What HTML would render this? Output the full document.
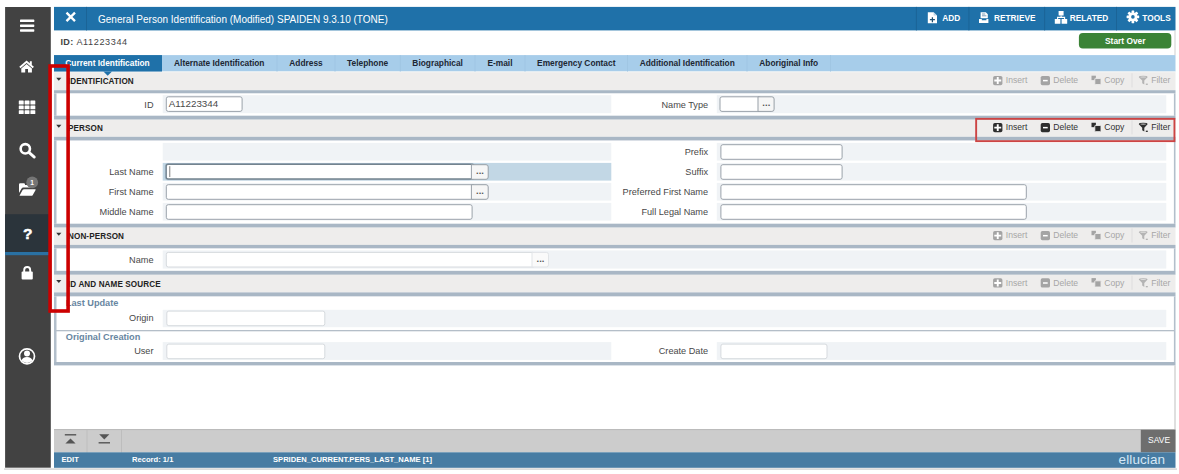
<!DOCTYPE html>
<html><head><meta charset="utf-8"><title>General Person Identification</title>
<style>
html,body{margin:0;padding:0;background:#fff;}
body{width:1179px;height:474px;position:relative;overflow:hidden;font-family:"Liberation Sans",sans-serif;font-size:9.17px;color:#333;}
.a{position:absolute;white-space:nowrap;}
#bg{left:0;top:0;}
#title{left:98px;top:8px;line-height:23px;font-size:10px;color:#fff;}
.hb{top:7px;line-height:23.6px;font-size:8.3px;font-weight:bold;color:#fff;}
#idrow{left:60.5px;top:35.6px;font-size:9.1px;letter-spacing:0.6px;line-height:12px;color:#444;}
#idrow b{margin-right:0.3px;letter-spacing:0.3px}
#start{left:1079px;top:34px;width:92.5px;line-height:15.5px;color:#fff;font-weight:bold;font-size:8.4px;text-align:center;}
.tab{top:55.1px;line-height:16.8px;font-weight:bold;font-size:8.35px;color:#1d2733;text-align:center;}
.tab.act{color:#fff;}
.nm{left:68px;font-weight:bold;font-size:8.15px;color:#222;letter-spacing:0.1px;}
.lbl{text-align:right;font-size:9.17px;color:#484848;line-height:17px;height:17px;width:120px;}
.val{font-size:9.8px;color:#4a4a4a;line-height:14px;}
.dots{font-size:9.4px;line-height:14.6px;color:#555;font-weight:bold;letter-spacing:0.1px;text-align:center;width:17px;}
.tool{font-size:8.6px;line-height:12px;}
.sub{font-weight:bold;color:#6886a1;font-size:9.2px;line-height:11px;}
.sb{top:452.9px;color:#fff;font-size:7.6px;font-weight:bold;line-height:14.6px;}
#save{left:1140.8px;top:429.8px;width:34.7px;color:#fff;font-size:8.5px;line-height:21px;text-align:center;text-indent:2px;}
#ell{left:1118.6px;top:452.8px;font-size:13.5px;letter-spacing:0.1px;line-height:13.4px;color:#d5e8f6;}
#q{left:5px;top:222.6px;width:45.5px;text-align:center;color:#fff;font-weight:bold;font-size:15.5px;line-height:22px;-webkit-text-stroke:0.5px #fff;}
</style></head><body>
<svg id="bg" class="a" width="1179" height="474" viewBox="0 0 1179 474">
<rect x="5.10" y="7.00" width="45.70" height="460.70" fill="#424242"/>
<rect x="5.10" y="214.20" width="45.70" height="37.80" fill="#2b343b"/>
<rect x="5.10" y="252.00" width="45.70" height="3.20" fill="#2a71a3"/>
<g transform="translate(5 7)">
<g fill="#fff">
<rect x="15" y="12.6" width="14.3" height="2.5" rx="0.6"/><rect x="15" y="17.4" width="14.3" height="2.5" rx="0.6"/><rect x="15" y="22.2" width="14.3" height="2.5" rx="0.6"/>
<path d="M21.6 53.4 L14.3 59.8 L15.5 61.2 L21.6 55.9 L27.7 61.2 L28.9 59.8 L26.8 58 V54.3 H24.8 V56.2 Z"/>
<path d="M21.6 56.9 L16.3 61.5 V65.4 H20.2 V62.1 H23 V65.4 H26.9 V61.5 Z"/>
<rect x="13.8" y="93.6" width="4.9" height="3.9" rx="0.5"/><rect x="19.6" y="93.6" width="4.9" height="3.9" rx="0.5"/><rect x="25.4" y="93.6" width="4.9" height="3.9" rx="0.5"/>
<rect x="13.8" y="98.4" width="4.9" height="3.9" rx="0.5"/><rect x="19.6" y="98.4" width="4.9" height="3.9" rx="0.5"/><rect x="25.4" y="98.4" width="4.9" height="3.9" rx="0.5"/>
<rect x="13.8" y="103.2" width="4.9" height="3.9" rx="0.5"/><rect x="19.6" y="103.2" width="4.9" height="3.9" rx="0.5"/><rect x="25.4" y="103.2" width="4.9" height="3.9" rx="0.5"/>
</g>
<circle cx="20.3" cy="141.8" r="4.65" fill="none" stroke="#fff" stroke-width="2.6"/>
<path d="M24.2 145.6 L29.3 150.1" stroke="#fff" stroke-width="2.8" stroke-linecap="round"/>
<g fill="#fff">
<path d="M14 177.5 q0 -1.2 1.2 -1.2 h3.6 q1.2 0 1.2 1.2 v0.5 h5.6 q1.2 0 1.2 1.2 v1.3 h-8.6 q-1 0 -1.6 1 l-2.6 4.6 Z"/>
<path d="M14.6 188.5 l3 -5.4 q0.5 -0.9 1.5 -0.9 h11 q1 0 0.5 0.9 l-2.8 4.8 q-0.5 0.9 -1.5 0.9 h-11.2 q-0.8 0 -0.5 -0.3 Z"/>
</g>
<circle cx="27.2" cy="175.4" r="5.9" fill="#757575"/>
<text x="27" y="178" font-size="6.6" font-weight="bold" fill="#fff" text-anchor="middle" font-family="Liberation Sans, sans-serif">1</text>
<path d="M19.2 265.2 v-2.2 a3 3 0 0 1 6 0 v2.2" fill="none" stroke="#fff" stroke-width="1.9"/>
<rect x="16.6" y="264.6" width="11.2" height="7.9" rx="1" fill="#fff"/>
<circle cx="22" cy="349.3" r="7.5" fill="none" stroke="#fff" stroke-width="1.7"/>
<circle cx="22" cy="346.6" r="3" fill="#fff"/>
<path d="M16.6 353.6 q0.8 -3.6 5.4 -3.6 q4.6 0 5.4 3.6 q-2.2 2.4 -5.4 2.4 q-3.2 0 -5.4 -2.4 Z" fill="#fff"/>
</g>
<rect x="54.00" y="6.90" width="1121.50" height="23.50" fill="#1f71a9"/>
<rect x="86.00" y="6.90" width="1.00" height="23.50" fill="#1b6497"/>
<rect x="915.90" y="6.90" width="1.00" height="23.50" fill="#1b6497"/>
<rect x="968.40" y="6.90" width="1.00" height="23.50" fill="#1b6497"/>
<rect x="1044.10" y="6.90" width="1.00" height="23.50" fill="#1b6497"/>
<rect x="1116.00" y="6.90" width="1.00" height="23.50" fill="#1b6497"/>
<path d="M66.5 12.6 L75 21.1 M75 12.6 L66.5 21.1" stroke="#fff" stroke-width="2.3"/>
<g>
<path d="M927.8 12.2 H933.6 L937 15.6 V23.2 H927.8 Z" fill="#fff"/>
<path d="M933.6 12.2 V15.6 H937 Z" fill="#b9d3e6"/>
<path d="M932.4 17.2 V22.2 M929.9 19.7 H934.9" stroke="#1d4f73" stroke-width="1.25"/>
<path d="M980.6 12.2 H985.8 L987.8 14.2 V18.2 H980.6 Z" fill="#fff"/>
<path d="M982 14 H985.2 M982 15.8 H986.4" stroke="#6f93b0" stroke-width="0.9"/>
<path d="M979 19 H981.8 V20.2 H986.4 V19 H988.4 V23 H979 Z" fill="#fff"/>
<rect x="1058.6" y="11" width="5" height="4.6" rx="0.4" fill="#fff"/>
<path d="M1061.1 15.6 V17.4 M1057.6 19.2 V17.4 H1064.6 V19.2" stroke="#fff" stroke-width="1.1" fill="none"/>
<rect x="1054.8" y="19" width="5.6" height="4.8" rx="0.4" fill="#fff"/>
<rect x="1061.6" y="19" width="5.6" height="4.8" rx="0.4" fill="#fff"/>
<g transform="translate(1132.9 16.9)">
<g fill="#fff">
<rect x="-1.35" y="-6.3" width="2.7" height="12.6" rx="0.4"/>
<rect x="-1.35" y="-6.3" width="2.7" height="12.6" rx="0.4" transform="rotate(45)"/>
<rect x="-1.35" y="-6.3" width="2.7" height="12.6" rx="0.4" transform="rotate(90)"/>
<rect x="-1.35" y="-6.3" width="2.7" height="12.6" rx="0.4" transform="rotate(135)"/>
<circle r="4.4"/>
</g>
<circle r="1.8" fill="#1f71a9"/>
</g>
</g>
<rect x="1078.9" y="33" width="92.4" height="15.5" rx="4" fill="#3b8336"/>
<rect x="54.00" y="55.10" width="1121.50" height="16.40" fill="#a7cdea"/>
<rect x="54.00" y="71.50" width="1121.50" height="0.70" fill="#f3f3f2"/>
<rect x="54.00" y="55.10" width="108.00" height="16.40" fill="#1f71a9"/>
<rect x="276.50" y="55.10" width="1.00" height="16.40" fill="#a0c6e3"/>
<rect x="334.50" y="55.10" width="1.00" height="16.40" fill="#a0c6e3"/>
<rect x="399.80" y="55.10" width="1.00" height="16.40" fill="#a0c6e3"/>
<rect x="474.50" y="55.10" width="1.00" height="16.40" fill="#a0c6e3"/>
<rect x="524.50" y="55.10" width="1.00" height="16.40" fill="#a0c6e3"/>
<rect x="627.00" y="55.10" width="1.00" height="16.40" fill="#a0c6e3"/>
<rect x="746.50" y="55.10" width="1.00" height="16.40" fill="#a0c6e3"/>
<rect x="830.00" y="55.10" width="1.00" height="16.40" fill="#a0c6e3"/>
<rect x="54.00" y="72.20" width="1121.50" height="18.00" fill="#eeedec"/>
<rect x="54.00" y="90.20" width="1121.50" height="3.20" fill="#a9b7c5"/>
<path d="M56.20 77.70 h5.2 l-2.6 3 Z" fill="#333"/>
<g transform="translate(993 75.80)"><rect x="0.1" y="0.1" width="9.3" height="9.3" rx="1.7" fill="#a4a4a4"/><path d="M4.75 1.3 V8.2 M1.3 4.75 H8.2" stroke="#fff" stroke-width="1.9"/></g>
<g transform="translate(1040.6 75.80)"><rect x="0.1" y="0.1" width="9.3" height="9.3" rx="1.7" fill="#a4a4a4"/><path d="M2.4 4.8 H7.1" stroke="#fff" stroke-width="1.5"/></g>
<g transform="translate(1091.3 75.50)"><rect x="0.2" y="0.2" width="4.4" height="4.4" fill="#a4a4a4"/><rect x="3.5" y="2.9" width="6.2" height="6.2" rx="0.5" fill="#a4a4a4" stroke="#eeedec" stroke-width="0.9"/></g>
<rect x="1131.50" y="73.30" width="1.00" height="14.00" fill="#dddddd"/>
<g transform="translate(1138.6 75.60)"><path d="M0.2 1.6 Q0.2 0.2 4.6 0.2 Q9 0.2 9 1.6 L5.7 5 V8.9 L3.6 7.6 V5 Z" fill="#b4b4b4"/><ellipse cx="4.6" cy="1.45" rx="3" ry="0.55" fill="#eeedec" opacity="0.75"/><rect x="7.2" y="8" width="2" height="1.3" fill="#b4b4b4"/></g>
<rect x="54.00" y="93.40" width="1121.50" height="22.40" fill="#b3bfcb"/>
<rect x="56.50" y="93.40" width="1117.40" height="22.40" fill="#fff"/>
<rect x="162.70" y="95.20" width="448.60" height="18.00" fill="#f0f3f6"/>
<rect x="716.80" y="95.20" width="449.50" height="18.00" fill="#f0f3f6"/>
<rect x="166.30" y="96.80" width="75.80" height="14.60" rx="2" fill="#fff" stroke="#9aa2aa" stroke-width="1.00"/>
<rect x="720.00" y="96.80" width="41.00" height="14.60" rx="2" fill="#fff" stroke="#9aa2aa" stroke-width="1.00"/>
<path d="M758.00 96.80 H771.90 a2.2 2.2 0 0 1 2.2 2.2 V109.20 a2.2 2.2 0 0 1 -2.2 2.2 H758.00 Z" fill="#f6f6f6" stroke="#979fa7" stroke-width="1"/>
<rect x="54.00" y="115.80" width="1121.50" height="3.90" fill="#a9b7c5"/>
<rect x="54.00" y="119.70" width="1121.50" height="17.10" fill="#eeedec"/>
<rect x="54.00" y="136.80" width="1121.50" height="3.80" fill="#a9b7c5"/>
<path d="M56.20 124.75 h5.2 l-2.6 3 Z" fill="#333"/>
<g transform="translate(993 122.85)"><rect x="0.1" y="0.1" width="9.3" height="9.3" rx="1.7" fill="#2e2e2e"/><path d="M4.75 1.3 V8.2 M1.3 4.75 H8.2" stroke="#fff" stroke-width="1.9"/></g>
<g transform="translate(1040.6 122.85)"><rect x="0.1" y="0.1" width="9.3" height="9.3" rx="1.7" fill="#2e2e2e"/><path d="M2.4 4.8 H7.1" stroke="#fff" stroke-width="1.5"/></g>
<g transform="translate(1091.3 122.55)"><rect x="0.2" y="0.2" width="4.4" height="4.4" fill="#2e2e2e"/><rect x="3.5" y="2.9" width="6.2" height="6.2" rx="0.5" fill="#2e2e2e" stroke="#eeedec" stroke-width="0.9"/></g>
<rect x="1131.50" y="120.35" width="1.00" height="14.00" fill="#dddddd"/>
<g transform="translate(1138.6 122.65)"><path d="M0.2 1.6 Q0.2 0.2 4.6 0.2 Q9 0.2 9 1.6 L5.7 5 V8.9 L3.6 7.6 V5 Z" fill="#2e2e2e"/><ellipse cx="4.6" cy="1.45" rx="3" ry="0.55" fill="#eeedec" opacity="0.75"/><rect x="7.2" y="8" width="2" height="1.3" fill="#2e2e2e"/></g>
<rect x="54.00" y="140.60" width="1121.50" height="83.20" fill="#b3bfcb"/>
<rect x="56.50" y="140.60" width="1117.40" height="83.20" fill="#fff"/>
<rect x="162.70" y="142.90" width="448.60" height="17.70" fill="#f0f3f6"/>
<rect x="716.80" y="142.90" width="449.50" height="17.70" fill="#f0f3f6"/>
<rect x="162.70" y="162.90" width="448.60" height="17.70" fill="#c2d7e5"/>
<rect x="716.80" y="162.90" width="449.50" height="17.70" fill="#f0f3f6"/>
<rect x="162.70" y="182.90" width="448.60" height="17.70" fill="#f0f3f6"/>
<rect x="716.80" y="182.90" width="449.50" height="17.70" fill="#f0f3f6"/>
<rect x="162.70" y="202.90" width="448.60" height="17.70" fill="#f0f3f6"/>
<rect x="716.80" y="202.90" width="449.50" height="17.70" fill="#f0f3f6"/>
<rect x="164.9" y="163" width="307" height="17.2" rx="3" fill="#9fb6c8" opacity="0.6"/>
<rect x="166.20" y="164.20" width="307.90" height="14.80" rx="2" fill="#fff" stroke="#74848f" stroke-width="1.40"/>
<rect x="169.20" y="166.20" width="1.10" height="10.80" fill="#8c8c8c"/>
<path d="M471.40 164.70 H486.00 a2.2 2.2 0 0 1 2.2 2.2 V177.10 a2.2 2.2 0 0 1 -2.2 2.2 H471.40 Z" fill="#f6f6f6" stroke="#979fa7" stroke-width="1"/>
<rect x="166.30" y="184.70" width="308.20" height="14.60" rx="2" fill="#fff" stroke="#9aa2aa" stroke-width="1.00"/>
<path d="M471.40 184.70 H486.00 a2.2 2.2 0 0 1 2.2 2.2 V197.10 a2.2 2.2 0 0 1 -2.2 2.2 H471.40 Z" fill="#f6f6f6" stroke="#979fa7" stroke-width="1"/>
<rect x="166.30" y="204.70" width="305.80" height="14.60" rx="2" fill="#fff" stroke="#9aa2aa" stroke-width="1.00"/>
<rect x="720.90" y="144.70" width="121.20" height="14.60" rx="2" fill="#fff" stroke="#9aa2aa" stroke-width="1.00"/>
<rect x="720.90" y="164.70" width="121.20" height="14.60" rx="2" fill="#fff" stroke="#9aa2aa" stroke-width="1.00"/>
<rect x="720.90" y="184.70" width="305.40" height="14.60" rx="2" fill="#fff" stroke="#9aa2aa" stroke-width="1.00"/>
<rect x="720.90" y="204.70" width="305.40" height="14.60" rx="2" fill="#fff" stroke="#9aa2aa" stroke-width="1.00"/>
<rect x="54.00" y="223.80" width="1121.50" height="3.80" fill="#a9b7c5"/>
<rect x="54.00" y="227.70" width="1121.50" height="17.20" fill="#eeedec"/>
<rect x="54.00" y="244.90" width="1121.50" height="3.60" fill="#a9b7c5"/>
<path d="M56.20 232.80 h5.2 l-2.6 3 Z" fill="#333"/>
<g transform="translate(993 230.90)"><rect x="0.1" y="0.1" width="9.3" height="9.3" rx="1.7" fill="#a4a4a4"/><path d="M4.75 1.3 V8.2 M1.3 4.75 H8.2" stroke="#fff" stroke-width="1.9"/></g>
<g transform="translate(1040.6 230.90)"><rect x="0.1" y="0.1" width="9.3" height="9.3" rx="1.7" fill="#a4a4a4"/><path d="M2.4 4.8 H7.1" stroke="#fff" stroke-width="1.5"/></g>
<g transform="translate(1091.3 230.60)"><rect x="0.2" y="0.2" width="4.4" height="4.4" fill="#a4a4a4"/><rect x="3.5" y="2.9" width="6.2" height="6.2" rx="0.5" fill="#a4a4a4" stroke="#eeedec" stroke-width="0.9"/></g>
<rect x="1131.50" y="228.40" width="1.00" height="14.00" fill="#dddddd"/>
<g transform="translate(1138.6 230.70)"><path d="M0.2 1.6 Q0.2 0.2 4.6 0.2 Q9 0.2 9 1.6 L5.7 5 V8.9 L3.6 7.6 V5 Z" fill="#b4b4b4"/><ellipse cx="4.6" cy="1.45" rx="3" ry="0.55" fill="#eeedec" opacity="0.75"/><rect x="7.2" y="8" width="2" height="1.3" fill="#b4b4b4"/></g>
<rect x="54.00" y="248.50" width="1121.50" height="22.40" fill="#b3bfcb"/>
<rect x="56.50" y="248.50" width="1117.40" height="22.40" fill="#fff"/>
<rect x="162.70" y="250.40" width="1003.60" height="18.20" fill="#f0f3f6"/>
<rect x="166.30" y="252.40" width="368.60" height="14.60" rx="2" fill="#fff" stroke="#d6dade" stroke-width="1.00"/>
<path d="M532.00 252.40 H546.30 a2.2 2.2 0 0 1 2.2 2.2 V264.80 a2.2 2.2 0 0 1 -2.2 2.2 H532.00 Z" fill="#fafafa" stroke="#e1e4e7" stroke-width="1"/>
<rect x="54.00" y="270.90" width="1121.50" height="3.90" fill="#a9b7c5"/>
<rect x="54.00" y="274.80" width="1121.50" height="17.60" fill="#eeedec"/>
<rect x="54.00" y="292.40" width="1121.50" height="4.10" fill="#a9b7c5"/>
<path d="M56.20 280.10 h5.2 l-2.6 3 Z" fill="#333"/>
<g transform="translate(993 278.20)"><rect x="0.1" y="0.1" width="9.3" height="9.3" rx="1.7" fill="#a4a4a4"/><path d="M4.75 1.3 V8.2 M1.3 4.75 H8.2" stroke="#fff" stroke-width="1.9"/></g>
<g transform="translate(1040.6 278.20)"><rect x="0.1" y="0.1" width="9.3" height="9.3" rx="1.7" fill="#a4a4a4"/><path d="M2.4 4.8 H7.1" stroke="#fff" stroke-width="1.5"/></g>
<g transform="translate(1091.3 277.90)"><rect x="0.2" y="0.2" width="4.4" height="4.4" fill="#a4a4a4"/><rect x="3.5" y="2.9" width="6.2" height="6.2" rx="0.5" fill="#a4a4a4" stroke="#eeedec" stroke-width="0.9"/></g>
<rect x="1131.50" y="275.70" width="1.00" height="14.00" fill="#dddddd"/>
<g transform="translate(1138.6 278.00)"><path d="M0.2 1.6 Q0.2 0.2 4.6 0.2 Q9 0.2 9 1.6 L5.7 5 V8.9 L3.6 7.6 V5 Z" fill="#b4b4b4"/><ellipse cx="4.6" cy="1.45" rx="3" ry="0.55" fill="#eeedec" opacity="0.75"/><rect x="7.2" y="8" width="2" height="1.3" fill="#b4b4b4"/></g>
<rect x="54.00" y="296.50" width="1121.50" height="65.50" fill="#b3bfcb"/>
<rect x="56.50" y="296.50" width="1117.40" height="65.50" fill="#fff"/>
<rect x="162.70" y="309.80" width="1003.60" height="17.40" fill="#f0f3f6"/>
<rect x="166.80" y="311.10" width="158.00" height="14.60" rx="2" fill="#fff" stroke="#d6dade" stroke-width="1.00"/>
<rect x="56.00" y="330.00" width="1118.10" height="1.30" fill="#b4bec8"/>
<rect x="162.70" y="342.10" width="448.60" height="17.80" fill="#f0f3f6"/>
<rect x="716.80" y="342.10" width="449.50" height="17.80" fill="#f0f3f6"/>
<rect x="166.80" y="344.10" width="158.00" height="14.60" rx="2" fill="#fff" stroke="#d6dade" stroke-width="1.00"/>
<rect x="720.90" y="344.10" width="106.10" height="14.60" rx="2" fill="#fff" stroke="#d6dade" stroke-width="1.00"/>
<rect x="54.00" y="362.00" width="1121.50" height="3.40" fill="#a9b7c5"/>
<rect x="1174.50" y="30.40" width="1.00" height="24.70" fill="#cfcfcf"/>
<rect x="1174.50" y="365.40" width="1.00" height="63.80" fill="#bfbfbf"/>
<rect x="54.00" y="429.20" width="1121.50" height="23.10" fill="#cccccc"/>
<rect x="54.00" y="429.20" width="1121.50" height="0.90" fill="#b5b5b5"/>
<rect x="86.50" y="430.00" width="1.00" height="22.30" fill="#bdbdbd"/>
<rect x="121.00" y="430.00" width="1.00" height="22.30" fill="#bdbdbd"/>
<g transform="translate(63.8 433.6)" fill="#555"><rect x="1" y="0.5" width="11.4" height="1.4"/><path d="M1.6 9.9 L6.7 4.9 L11.8 9.9 Z"/></g>
<g transform="translate(97.6 433.2)" fill="#555"><path d="M1.6 1 L6.7 6.2 L11.8 1 Z"/><rect x="1" y="8.9" width="11.4" height="1.4"/></g>
<rect x="1140.80" y="429.80" width="34.70" height="22.50" fill="#6e6e6e"/>
<rect x="54.00" y="452.30" width="1121.50" height="15.50" fill="#477ca3"/>
<rect x="4.00" y="468.60" width="1173.00" height="0.90" fill="#b9b9b9"/>
<path d="M103.4 71.4 h8.6 l-4.3 4.3 Z" fill="#1f71a9"/>
</svg>
<div id="q" class="a">?</div>
<div id="title" class="a">General Person Identification (Modified) SPAIDEN 9.3.10 (TONE)</div>
<div class="a hb" style="left:942.2px">ADD</div>
<div class="a hb" style="left:994px">RETRIEVE</div>
<div class="a hb" style="left:1069.7px">RELATED</div>
<div class="a hb" style="left:1142.3px">TOOLS</div>
<div id="idrow" class="a"><b>ID:</b> A11223344</div>
<div id="start" class="a">Start Over</div>
<div class="a tab act" style="left:53.5px;width:108.0px">Current Identification</div>
<div class="a tab" style="left:161.5px;width:115.5px">Alternate Identification</div>
<div class="a tab" style="left:277.0px;width:58.0px">Address</div>
<div class="a tab" style="left:335.0px;width:65.3px">Telephone</div>
<div class="a tab" style="left:400.3px;width:74.7px">Biographical</div>
<div class="a tab" style="left:475.0px;width:50.0px">E-mail</div>
<div class="a tab" style="left:525.0px;width:102.5px">Emergency Contact</div>
<div class="a tab" style="left:627.5px;width:119.5px">Additional Identification</div>
<div class="a tab" style="left:747.0px;width:83.5px">Aboriginal Info</div>
<div class="a nm" style="top:72.2px;line-height:20.4px">IDENTIFICATION</div>
<div class="a tool" style="left:1005.8px;top:74.4px;color:#a6a6a6">Insert</div>
<div class="a tool" style="left:1053.3px;top:74.4px;color:#a6a6a6">Delete</div>
<div class="a tool" style="left:1104.2px;top:74.4px;color:#a6a6a6">Copy</div>
<div class="a tool" style="left:1151.2px;top:74.4px;color:#a6a6a6">Filter</div>
<div class="a lbl" style="left:33.5px;top:97.0px">ID</div>
<div class="a val" style="left:168.8px;top:97.3px">A11223344</div>
<div class="a lbl" style="left:588.1px;top:97.0px">Name Type</div>
<div class="a dots" style="left:757.8px;top:96.3px">...</div>
<div class="a nm" style="top:119.7px;line-height:17.5px">PERSON</div>
<div class="a tool" style="left:1005.8px;top:121.4px;color:#303030">Insert</div>
<div class="a tool" style="left:1053.3px;top:121.4px;color:#303030">Delete</div>
<div class="a tool" style="left:1104.2px;top:121.4px;color:#303030">Copy</div>
<div class="a tool" style="left:1151.2px;top:121.4px;color:#303030">Filter</div>
<div class="a lbl" style="left:33.5px;top:164.1px">Last Name</div>
<div class="a lbl" style="left:33.5px;top:184.1px">First Name</div>
<div class="a lbl" style="left:33.5px;top:204.1px">Middle Name</div>
<div class="a lbl" style="left:588.1px;top:144.1px">Prefix</div>
<div class="a lbl" style="left:588.1px;top:164.1px">Suffix</div>
<div class="a lbl" style="left:588.1px;top:184.1px">Preferred First Name</div>
<div class="a lbl" style="left:588.1px;top:204.1px">Full Legal Name</div>
<div class="a dots" style="left:471.5px;top:164.2px">...</div>
<div class="a dots" style="left:471.5px;top:184.2px">...</div>
<div class="a nm" style="top:227.7px;line-height:18.6px">NON-PERSON</div>
<div class="a tool" style="left:1005.8px;top:228.5px;color:#a6a6a6">Insert</div>
<div class="a tool" style="left:1053.3px;top:228.5px;color:#a6a6a6">Delete</div>
<div class="a tool" style="left:1104.2px;top:228.5px;color:#a6a6a6">Copy</div>
<div class="a tool" style="left:1151.2px;top:228.5px;color:#a6a6a6">Filter</div>
<div class="a lbl" style="left:33.5px;top:251.6px">Name</div>
<div class="a dots" style="left:532.0px;top:251.9px">...</div>
<div class="a nm" style="top:274.8px;line-height:19.0px">ID AND NAME SOURCE</div>
<div class="a tool" style="left:1005.8px;top:276.8px;color:#a6a6a6">Insert</div>
<div class="a tool" style="left:1053.3px;top:276.8px;color:#a6a6a6">Delete</div>
<div class="a tool" style="left:1104.2px;top:276.8px;color:#a6a6a6">Copy</div>
<div class="a tool" style="left:1151.2px;top:276.8px;color:#a6a6a6">Filter</div>
<div class="a sub" style="left:65.8px;top:298.4px">Last Update</div>
<div class="a lbl" style="left:33.5px;top:310.0px">Origin</div>
<div class="a sub" style="left:65.8px;top:331.6px">Original Creation</div>
<div class="a lbl" style="left:33.5px;top:343.4px">User</div>
<div class="a lbl" style="left:588.1px;top:343.4px">Create Date</div>
<div id="save" class="a">SAVE</div>
<div class="a sb" style="left:61.5px">EDIT</div>
<div class="a sb" style="left:132px">Record: 1/1</div>
<div class="a sb" style="left:273px">SPRIDEN_CURRENT.PERS_LAST_NAME [1]</div>
<div id="ell" class="a">ellucian</div>
<svg class="a" style="left:0;top:0" width="1179" height="474" viewBox="0 0 1179 474">
<rect x="50.1" y="66" width="18" height="245" fill="none" stroke="#cc0000" stroke-width="3.6"/>
<rect x="976.15" y="118.85" width="198.3" height="22.3" fill="none" stroke="#cc4444" stroke-width="1.9"/>
</svg>
</body></html>
